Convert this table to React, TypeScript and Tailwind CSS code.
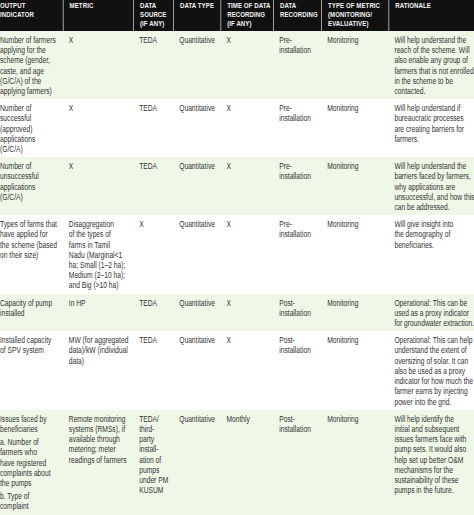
type Cell = string[] | string[][];

interface Row {
  green: boolean;
  cells: Cell[];
}

// widths are in the un-squeezed frame; the whole table is squeezed to 80% to get the condensed face
const cols = 'grid grid-cols-[86px_88px_50px_59px_66px_60px_84px_140px]';

const header: string[][] = [
  ['OUTPUT', 'INDICATOR'],
  ['METRIC'],
  ['DATA', 'SOURCE', '(IF ANY)'],
  ['DATA TYPE'],
  ['TIME OF DATA', 'RECORDING', '(IF ANY)'],
  ['DATA', 'RECORDING'],
  ['TYPE OF METRIC', '(MONITORING/', 'EVALUATIVE)'],
  ['RATIONALE'],
];

const pre = ['Pre-', 'installation'];
const post = ['Post-', 'installation'];

const rows: Row[] = [
  {
    green: true,
    cells: [
      ['Number of farmers', 'applying for the', 'scheme (gender,', 'caste, and age', '(G/C/A) of the', 'applying farmers)'],
      ['X'],
      ['TEDA'],
      ['Quantitative'],
      ['X'],
      pre,
      ['Monitoring'],
      ['Will help understand the', 'reach of the scheme. Will', 'also enable any group of', 'farmers that is not enrolled', 'in the scheme to be', 'contacted.'],
    ],
  },
  {
    green: false,
    cells: [
      ['Number of', 'successful', '(approved)', 'applications', '(G/C/A)'],
      ['X'],
      ['TEDA'],
      ['Quantitative'],
      ['X'],
      pre,
      ['Monitoring'],
      ['Will help understand if', 'bureaucratic processes', 'are creating barriers for', 'farmers.'],
    ],
  },
  {
    green: true,
    cells: [
      ['Number of', 'unsuccessful', 'applications', '(G/C/A)'],
      ['X'],
      ['TEDA'],
      ['Quantitative'],
      ['X'],
      pre,
      ['Monitoring'],
      ['Will help understand the', 'barriers faced by farmers,', 'why applications are', 'unsuccessful, and how this', 'can be addressed.'],
    ],
  },
  {
    green: false,
    cells: [
      ['Types of farms that', 'have applied for', 'the scheme (based', 'on their size)'],
      ['Disaggregation', 'of the types of', 'farms in Tamil', 'Nadu (Marginal<1', 'ha; Small (1–2 ha);', 'Medium (2–10 ha);', 'and Big (>10 ha)'],
      ['X'],
      ['Quantitative'],
      ['X'],
      pre,
      ['Monitoring'],
      ['Will give insight into', 'the demography of', 'beneficiaries.'],
    ],
  },
  {
    green: true,
    cells: [
      ['Capacity of pump', 'installed'],
      ['In HP'],
      ['TEDA'],
      ['Quantitative'],
      ['X'],
      post,
      ['Monitoring'],
      ['Operational: This can be', 'used as a proxy indicator', 'for groundwater extraction.'],
    ],
  },
  {
    green: false,
    cells: [
      ['Installed capacity', 'of SPV system'],
      ['MW (for aggregated', 'data)/kW (individual', 'data)'],
      ['TEDA'],
      ['Quantitative'],
      ['X'],
      post,
      ['Monitoring'],
      ['Operational: This can help', 'understand the extent of', 'oversizing of solar. It can', 'also be used as a proxy', 'indicator for how much the', 'farmer earns by injecting', 'power into the grid.'],
    ],
  },
  {
    green: true,
    cells: [
      [
        ['Issues faced by', 'beneficiaries'],
        ['a. Number of', 'farmers who', 'have registered', 'complaints about', 'the pumps'],
        ['b. Type of', 'complaint'],
      ],
      ['Remote monitoring', 'systems (RMSs), if', 'available through', 'metering; meter', 'readings of farmers'],
      ['TEDA/', 'third-', 'party', 'install-', 'ation of', 'pumps', 'under PM', 'KUSUM'],
      ['Quantitative'],
      ['Monthly'],
      post,
      ['Monitoring'],
      ['Will help identify the', 'initial and subsequent', 'issues farmers face with', 'pump sets. It would also', 'help set up better O&M', 'mechanisms for the', 'sustainability of these', 'pumps in the future.'],
    ],
  },
];

function Lines({ lines }: { lines: string[] }) {
  return (
    <>
      {lines.map((l, i) => (
        <div key={i} className="whitespace-nowrap">
          {l}
        </div>
      ))}
    </>
  );
}

function BodyCell({ cell }: { cell: Cell }) {
  const isParas = Array.isArray(cell[0]);
  return (
    <div className="px-[7.5px] pt-[4px] pb-[3px]">
      {isParas ? (
        <div className="flex flex-col gap-[3px]">
          {(cell as string[][]).map((p, i) => (
            <div key={i}>
              <Lines lines={p} />
            </div>
          ))}
        </div>
      ) : (
        <Lines lines={cell as string[]} />
      )}
    </div>
  );
}

export default function App() {
  return (
    <div
      className="w-[474px] h-[515px] overflow-hidden bg-white"
      style={{ fontFamily: '"Liberation Sans", Arial, sans-serif' }}
    >
      <div className="ml-[-6px] w-max origin-top-left scale-x-[0.8]">
        {/* header */}
        <div className={`${cols} bg-[#111111] text-[#f5f5f5] font-bold text-[7.6px] leading-[9.2px] tracking-[0.1px]`}>
          {header.map((h, i) => (
            <div
              key={i}
              className={`px-[7.5px] pt-[1px] pb-[3px] h-[31px] ${i > 0 ? 'border-l border-[#c4c4c4]' : ''}`}
            >
              <Lines lines={h} />
            </div>
          ))}
        </div>
        {/* body */}
        {rows.map((r, i) => (
          <div
            key={i}
            className={`${cols} text-[8.4px] leading-[10.2px] text-[#333333] ${r.green ? 'bg-[#eff7e7]' : 'bg-white'}`}
          >
            {r.cells.map((c, j) => (
              <BodyCell key={j} cell={c} />
            ))}
          </div>
        ))}
      </div>
    </div>
  );
}
